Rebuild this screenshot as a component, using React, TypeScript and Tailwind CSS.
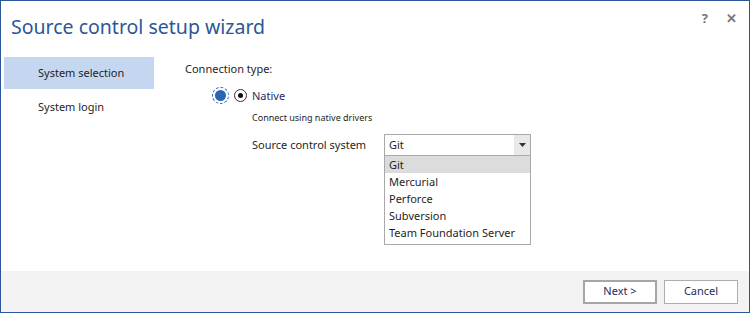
const font = { fontFamily: '"Noto Sans", "Open Sans", sans-serif' };

const systems = ["Git", "Mercurial", "Perforce", "Subversion", "Team Foundation Server"];

function NavItem({ label, active }: { label: string; active?: boolean }) {
  return (
    <div
      className={`flex h-[32px] items-center pl-[34px] text-[11px] text-[#1e1e1e] ${
        active ? "bg-[#c5d6f1]" : ""
      }`}
    >
      {label}
    </div>
  );
}

export default function App() {
  return (
    <div
      className="flex h-[313px] w-[750px] flex-col border border-[#2b579a] bg-white text-[#1e1e1e]"
      style={font}
    >
      <header className="flex h-[55px] items-start justify-between">
        <h1 className="pl-[10px] pt-[11px] text-[19.5px] leading-[30px] text-[#2b5797]">
          Source control setup wizard
        </h1>
        <div className="flex items-center gap-[18px] pr-[12px] pt-[8px] text-[13px] font-bold text-[#777777]">
          <span className="pl-[2px]">?</span>
          <span>✕</span>
        </div>
      </header>

      <div className="flex flex-1">
        <nav className="ml-[3px] w-[150px] pt-[1px]">
          <NavItem label="System selection" active />
          <div className="pt-[2px]">
            <NavItem label="System login" />
          </div>
        </nav>

        <section className="ml-[31px] flex-1 pt-[5px] text-[11px]">
          <div className="leading-[16px]">Connection type:</div>

          <div className="mt-[10px] ml-[27px] flex items-center">
            <span className="flex h-[17px] w-[17px] items-center justify-center rounded-full border border-dashed border-[#2b64b0]">
              <span className="h-[11px] w-[11px] rounded-full bg-[#2b64b0]" />
            </span>
            <span className="ml-[5px] flex h-[13px] w-[13px] items-center justify-center rounded-full border border-[#333]">
              <span className="h-[5px] w-[5px] rounded-full bg-[#111]" />
            </span>
            <span className="ml-[5px] leading-[16px] text-[#2b2b60]">Native</span>
          </div>

          <div className="mt-[7px] ml-[67px] text-[9px] leading-[14px]">Connect using native drivers</div>

          <div className="mt-[9px] ml-[67px] flex items-center">
            <span className="w-[132px] leading-[16px]">Source control system</span>
            <div className="relative">
              <div className="flex h-[22px] w-[147px] items-center border border-[#a9a9a9] bg-white">
                <span className="flex-1 pl-[4px]">Git</span>
                <span className="flex h-full w-[16px] items-center justify-center bg-[#e8e8e8]">
                  <svg width="7" height="4" viewBox="0 0 7 4">
                    <path d="M0 0h7L3.5 4z" fill="#333" />
                  </svg>
                </span>
              </div>
              <ul className="absolute left-0 top-[22px] z-10 w-[147px] border border-t-0 border-[#a9a9a9] bg-white pb-[3px]">
                {systems.map((s, i) => (
                  <li
                    key={s}
                    className={`h-[17px] pl-[4px] leading-[17px] ${i === 0 ? "bg-[#dcdcdc]" : ""}`}
                  >
                    {s}
                  </li>
                ))}
              </ul>
            </div>
          </div>
        </section>
      </div>

      <footer className="flex h-[41px] items-center justify-end gap-[7px] bg-[#f3f3f3] pr-[11px] text-[11px]">
        <button className="h-[24px] w-[74px] border-2 border-[#a6a6a6] bg-white text-[#2b2b60]">
          Next &gt;
        </button>
        <button className="h-[24px] w-[74px] border border-[#adadad] bg-white text-[#2b2b60]">
          Cancel
        </button>
      </footer>
    </div>
  );
}
